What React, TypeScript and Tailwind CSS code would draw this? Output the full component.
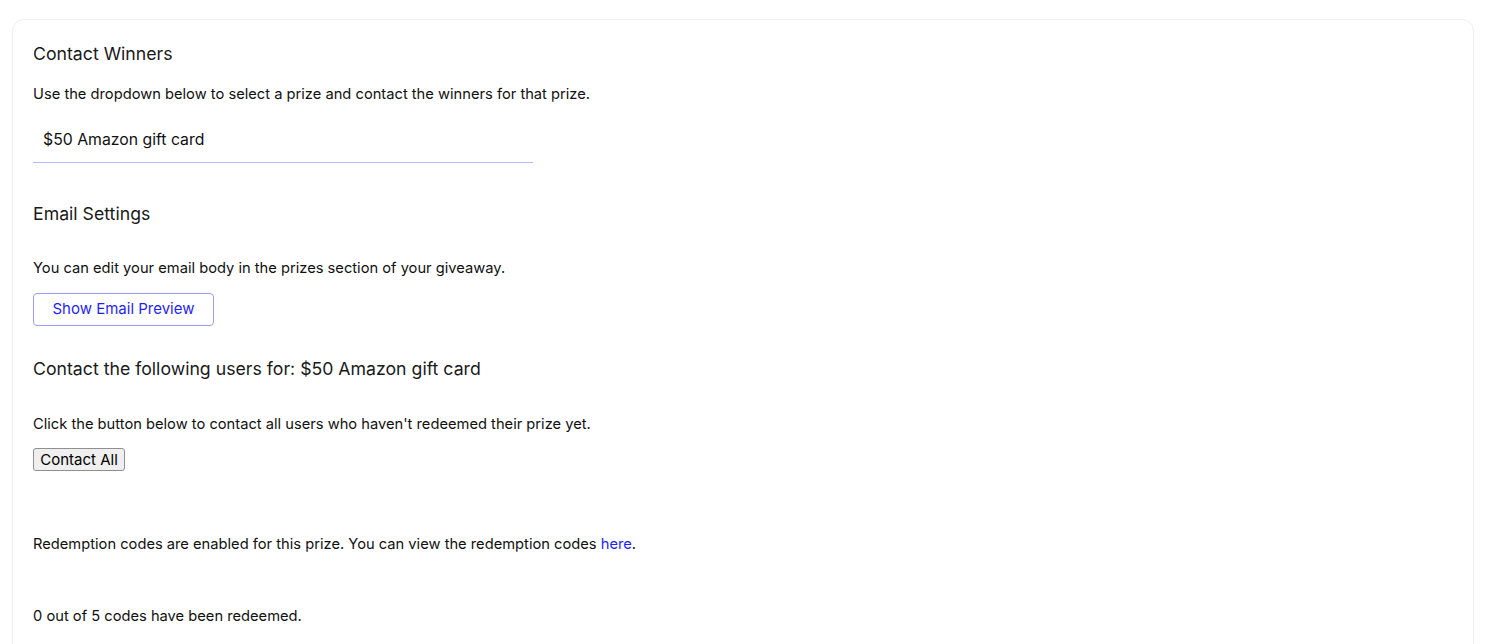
import React from "react";

export default function App() {
  return (
    <div className="min-h-screen bg-white pt-[19px] px-[12px] text-[#111]" style={{ fontFamily: "Inter, 'Noto Sans', sans-serif" }}>
      <div className="w-[1462px] h-[640px] border border-[#efefef] rounded-[12px] px-5 pt-5 overflow-hidden">
        <h2 className="text-[17.7px] leading-[28px] font-normal text-[#1a1a1a]">Contact Winners</h2>
        <p className="mt-[15px] text-[14.7px] leading-[22px]">Use the dropdown below to select a prize and contact the winners for that prize.</p>
        <div className="mt-[13px] w-[500px] h-[45px] border-b border-[#b8b8ff] flex items-center pl-[10px] text-[15.8px]">
          $50 Amazon gift card
        </div>
        <h2 className="mt-[37px] text-[17.7px] leading-[28px] font-normal text-[#1a1a1a]">Email Settings</h2>
        <p className="mt-[29px] text-[14.7px] leading-[22px]">You can edit your email body in the prizes section of your giveaway.</p>
        <button className="mt-[14px] block w-[181px] h-[33px] border border-[#9c9cff] rounded-[4px] text-[15px] text-[#1f1fff] bg-white">
          Show Email Preview
        </button>
        <h2 className="mt-[29px] text-[17.7px] leading-[28px] font-normal text-[#1a1a1a]">Contact the following users for: $50 Amazon gift card</h2>
        <p className="mt-[30px] text-[14.7px] leading-[22px]">Click the button below to contact all users who haven't redeemed their prize yet.</p>
        <button className="mt-[13px] block h-[23px] w-[92px] border border-[#8f8f8f] rounded-[3px] bg-[#efefef] text-[15px] leading-[20px] text-black">
          Contact All
        </button>
        <p className="mt-[62px] text-[14.7px] leading-[22px]">
          Redemption codes are enabled for this prize. You can view the redemption codes{" "}
          <a className="text-[#1f1fff]" href="#">here</a>.
        </p>
        <p className="mt-[50px] text-[14.7px] leading-[22px]">0 out of 5 codes have been redeemed.</p>
      </div>
    </div>
  );
}
